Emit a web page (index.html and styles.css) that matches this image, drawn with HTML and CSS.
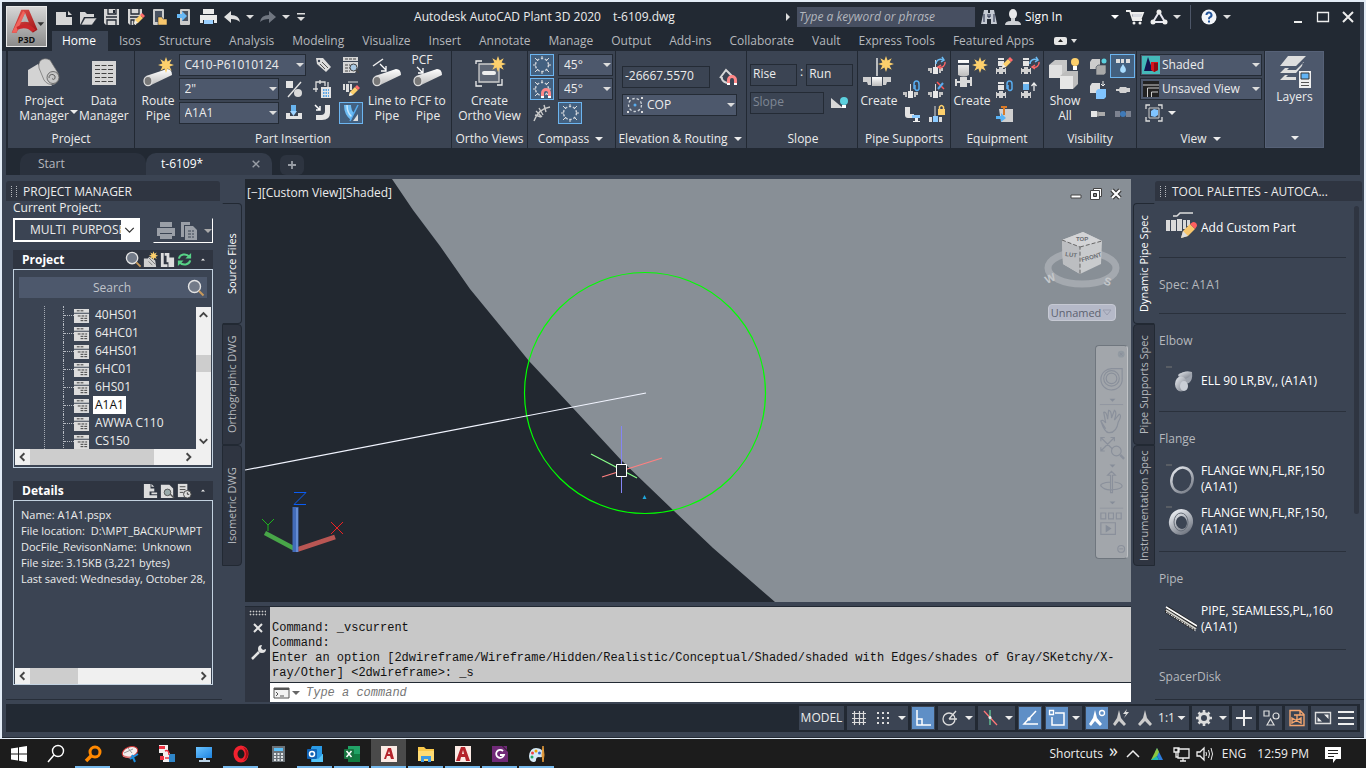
FILE: index.html
```html
<!DOCTYPE html>
<html lang="en">
<head>
<meta charset="utf-8">
<title>Autodesk AutoCAD Plant 3D 2020 - t-6109.dwg</title>
<link rel="stylesheet" href="styles.css">
</head>
<body>
<svg class="sprite" aria-hidden="true">
  <defs>
    <linearGradient id="gTube" x1="0" y1="0" x2="0" y2="1"><stop offset="0" stop-color="#fff"/><stop offset="1" stop-color="#bbb"/></linearGradient>
    <linearGradient id="gRed" x1="0" y1="0" x2="1" y2="1"><stop offset="0" stop-color="#e8564f"/><stop offset="1" stop-color="#9c1418"/></linearGradient>
    <linearGradient id="gSteel" x1="0" y1="0" x2="1" y2="1"><stop offset="0" stop-color="#e8ebf0"/><stop offset="1" stop-color="#717782"/></linearGradient>
    <linearGradient id="gBlue" x1="0" y1="0" x2="1" y2="1"><stop offset="0" stop-color="#6cc4ff"/><stop offset="1" stop-color="#1d83e0"/></linearGradient>
    <path id="spark" d="M0-8 1.600-3.600 5.700-5.700 3.600-1.600 8 0 3.600 1.600 5.700 5.700 1.600 3.600 0 8-1.600 3.600-5.700 5.700-3.600 1.600-8 0-3.600-1.600-5.700-5.700-1.600-3.600z" fill="#fdd06c"/>
    <g id="pencil"><path d="M-4 5-3 1 2-4 5-1 0 4z" fill="#fdd06c"/><path d="M2-4 4-6 7-3 5-1z" fill="#ff6b6b"/><path d="M-4 5-3 1 0 4z" fill="#eee"/></g>
    <g id="magnet"><path d="M0 9V5a5 5 0 0 1 10 0v4H7V5a2 2 0 0 0-4 0v4z" fill="#f88"/><path d="M0 8h3v2H0zM7 8h3v2H7z" fill="#fff"/></g>
    <g id="valve"><path d="M5.500 1v7" stroke="#ddd"/><path d="M3 8h5v7H3z" fill="#e8e8e8"/><path d="M-2 9h4v5H0v-2h-2zM9 9h4v3h-2v2H9z" fill="#c4c4c4"/></g>
    <g id="vessel"><path d="M2 0h6v2H2zM2 3h6v5H2z" fill="#e4e4e4"/><path d="M3 9h4v2h2v-1h1v6H9v-2H7v2H3v-2H1v2H0v-6h1v1h2z" fill="#d2d2d2"/></g>
    <g id="swirl" fill="none" stroke-width="1.500"><path d="M0 6A4.500 4.500 0 0 1 7 2" stroke="#6dbdf5"/><path d="M6-1 8 2 5 4" stroke="#6dbdf5"/><path d="M9 4A4.500 4.500 0 0 1 3 9" stroke="#f66"/><path d="M5 7 2 9l3 2" stroke="#f66"/></g>
  </defs>
  <symbol id="i-new" viewBox="0 0 24 24"><path d="M4 7h10v5h6v8H4z" fill="#d6d6d6"/><path d="M16 6v4h4z" fill="#d6d6d6"/></symbol>
  <symbol id="i-open" viewBox="0 0 24 24"><path d="M4 20V7h5l2 2h7v3H8z" fill="#d6d6d6"/><path d="M9 13h12l-5 7H5z" fill="#d6d6d6" stroke="#222933" stroke-width=".6"/></symbol>
  <symbol id="i-save" viewBox="0 0 24 24"><path d="M4 4h15v16H6l-2-2z" fill="#d6d6d6"/><path d="M8 4v5h8V4M6 12h11M7 20v-5h9v5" fill="none" stroke="#222933" stroke-width="1.300"/><path d="M13 5h2v3h-2z" fill="#222933"/></symbol>
  <symbol id="i-saveas" viewBox="0 0 24 24"><path d="M4 4h14v6l-5 6-1 4H6l-2-2z" fill="#d6d6d6"/><path d="M7 4v5h8V4M6 12h9M7 20v-5h3v5" fill="none" stroke="#222933" stroke-width="1.300"/><use href="#pencil" x="14" y="14"/></symbol>
  <symbol id="i-web" viewBox="0 0 24 24"><rect x="5" y="4" width="11" height="16" rx="1" fill="#ccc"/><path d="M7 6h7v11H7z" fill="#4a5362"/><path d="M10 20v-8h4l1 2h4v6z" fill="#f7c66c" stroke="#222933" stroke-width=".5"/></symbol>
  <symbol id="i-websave" viewBox="0 0 24 24"><rect x="8" y="4" width="10" height="16" rx="1" fill="#ccc"/><path d="M10 6h6v10h-6z" fill="#4a5362"/><path d="M5 9h5V6l5 5-5 5v-3H5z" fill="#67b8f6"/></symbol>
  <symbol id="i-print" viewBox="0 0 24 24"><path d="M7 4h11v5H7zM4 10h17v8h-3v-3H7v3H4z" fill="#e9e9e9"/><path d="M8 15h9v4H8z" fill="#9bd0ff"/></symbol>
  <symbol id="i-undo" viewBox="0 0 24 24"><path d="M4 12 11 6v4q8 0 9 7-3-3-9-3v4z" fill="#e0e0e0"/></symbol>
  <symbol id="i-redo" viewBox="0 0 24 24"><path d="M20 12 13 6v4q-8 0-9 7 3-3 9-3v4z" fill="#707680"/></symbol>
  <symbol id="i-down" viewBox="0 0 12 12"><path d="M2 4h8L6 8z" fill="currentColor"/></symbol>
  <symbol id="i-more" viewBox="0 0 12 12"><path d="M2 2h8v1.500H2zM2 6h8L6 10z" fill="currentColor"/></symbol>
  <symbol id="i-right" viewBox="0 0 12 12"><path d="M4 2v8l4-4z" fill="currentColor"/></symbol>
  <symbol id="i-binoc" viewBox="0 0 24 24"><path d="M7 5h4v3h2V5h4l3 14h-6v-5h-4v5H4z" fill="#c5cad3"/><path d="M7 9v8M17 9v8M11 9v3h2V9" stroke="#1d2440" fill="none"/></symbol>
  <symbol id="i-user" viewBox="0 0 24 24"><ellipse cx="12" cy="9" rx="4" ry="5" fill="#e8e8ea"/><path d="M10 13h4v3q6 0 6 4H4q0-4 6-4z" fill="#cfd1d5"/></symbol>
  <symbol id="i-cart" viewBox="0 0 24 24"><path d="M3 6h4l3 9h9M8 8h12l-2 5H9" fill="none" stroke="#eee" stroke-width="1.800"/><path d="M9 9h10l-1 3h-8z" fill="#d9dbe2"/><circle cx="11" cy="18" r="1.500" fill="#eee"/><circle cx="17" cy="18" r="1.500" fill="#eee"/></symbol>
  <symbol id="i-a360" viewBox="0 0 24 24"><path d="M12 7 6 17h12z" fill="none" stroke="#e6e6f0" stroke-width="2"/><circle cx="12" cy="7" r="2.500" fill="#eee"/><circle cx="6" cy="17" r="2.500" fill="#eee"/><circle cx="18" cy="17" r="2.500" fill="#eee"/></symbol>
  <symbol id="i-help" viewBox="0 0 24 24"><circle cx="12" cy="12" r="7.500" fill="#f4f6fa"/><path d="M9.500 10a2.500 2.500 0 1 1 3.500 2.200q-1 .5-1 2M12 15.500v2" fill="none" stroke="#23559b" stroke-width="2"/></symbol>
  <symbol id="i-min" viewBox="0 0 24 24"><path d="M8 17h8" stroke="#eee" stroke-width="2"/></symbol>
  <symbol id="i-max" viewBox="0 0 24 24"><path d="M6.500 7.500h11v9h-11z" fill="none" stroke="#eee" stroke-width="1.300"/></symbol>
  <symbol id="i-close" viewBox="0 0 24 24"><path d="m7 7 10 10M17 7 7 17" stroke="currentColor" stroke-width="2"/></symbol>

  <symbol id="i-projmgr" viewBox="0 0 34 34"><path d="M1 14 11 8 25 30H1z" fill="#d3d3d3"/><path d="M13 5q4-4 10-1l8 13q3 7-3 11-7 2-11-4l-5-12q-1-4 1-7z" fill="#cfcfcf" stroke="#6a6a6a" stroke-width=".7"/><circle cx="26" cy="21.500" r="6" fill="#c6c6c6" stroke="#555" stroke-width=".8"/><path d="M22 22q0-4 4-3.500 3 1 2 4-2 2-3 0" fill="none" stroke="#555" stroke-width=".9"/></symbol>
  <symbol id="i-datamgr" viewBox="0 0 34 34"><path d="M5 5h24v24H5z" fill="#d6d6d6"/><path d="M8 9.500h18M8 13.500h18M8 17.500h18M8 21.500h18M8 25.500h18" stroke="#444" stroke-dasharray="5 1.500"/></symbol>
  <symbol id="i-pipe" viewBox="0 0 34 34"><path d="M5 20 26 13q5 0 5 6L8 30q-6-2-3-10z" fill="url(#gTube)"/><ellipse cx="7" cy="25" rx="4" ry="4.700" fill="#777" stroke="#ddd" stroke-width="1.300"/></symbol>
  <symbol id="i-route" viewBox="0 0 34 34"><use href="#i-pipe" width="34" height="34"/><use href="#spark" x="25" y="9"/></symbol>
  <symbol id="i-linepipe" viewBox="0 0 34 34"><use href="#i-pipe" width="34" height="34"/><path d="m3 10 10-7" stroke="#eee" stroke-width="1.500"/><path d="m10 8 6 6M16 10v5h-5" fill="none" stroke="#fff" stroke-width="1.300"/></symbol>
  <symbol id="i-pcf" viewBox="0 0 34 34"><use href="#i-pipe" width="34" height="34"/><path d="m6 11 6 6M12 12v5H7" fill="none" stroke="#fff" stroke-width="1.300"/></symbol>
  <symbol id="i-tag" viewBox="0 0 24 24"><path d="M5 5h7l8 9-5 5-9-8z" fill="#dcdcdc"/><circle cx="8" cy="8" r="1.200" fill="#3b4453"/><path d="m9 11 5 5M11 9l6 6" stroke="#555"/></symbol>
  <symbol id="i-specview" viewBox="0 0 24 24"><path d="M4 4h15v4H4zM4 9h15v5l-3 6H4z" fill="#d6d6d6"/><path d="M6 6h11M6 12h5M6 15h5M6 18h5" stroke="#444" stroke-dasharray="3 1"/><circle cx="14.500" cy="14.500" r="3.500" fill="#a9c9e4" stroke="#444"/><path d="m17 17 3 3" stroke="#444" stroke-width="1.500"/></symbol>
  <symbol id="i-pct" viewBox="0 0 24 24"><path d="M4 4h7v7H4z" fill="#e3e3e3"/><path d="M19 5 6 20" stroke="#e3e3e3" stroke-width="1.400"/><circle cx="16" cy="16" r="4" fill="#d9d9d9"/></symbol>
  <symbol id="i-assign" viewBox="0 0 24 24"><path d="M5 10V5h9v4M9 3v4M17 5v5M2 12h5M5 9v6" fill="none" stroke="#ddd" stroke-width="1.300"/><path d="M10 10h10v11H10z" fill="#e3e3e3"/><path d="M12 13h6M12 16h6M12 19h6" stroke="#2990e8" stroke-width="1.500" stroke-dasharray="1.500 1"/></symbol>
  <symbol id="i-pipeedit" viewBox="0 0 24 24"><path d="M4 7h2v6H4zM7 7h3v8H7zM11 7h2v6h-2z" fill="#ddd"/><path d="M9 5h10" stroke="#ddd"/><use href="#pencil" x="14" y="14"/></symbol>
  <symbol id="i-tap" viewBox="0 0 24 24"><path d="M4 12h4v3h8v-3h4v6H4z" fill="#e3e3e3"/><path d="M9 4h5v7h-5z" fill="#68b4ef"/><path d="M8 10h7l-3.500 5z" fill="#9ed3ff"/></symbol>
  <symbol id="i-bend" viewBox="0 0 24 24"><path d="M14 4h5v8q0 7-8 7H5v-5h5q4 0 4-4z" fill="#e6e6e6"/><path d="m4 4 5 5M9 5v4H5" fill="none" stroke="#fff" stroke-width="1.500"/></symbol>
  <symbol id="i-cutback" viewBox="0 0 24 24"><path d="M5 4h7q0 5 3 8l-3 7Q5 14 5 4z" fill="#6dbdf5"/><path d="M8 4q0 8 5 12" stroke="#c6e8ff" stroke-width="1.500" fill="none"/><path d="M19 4 11 20" stroke="#58acef" stroke-width="1.500"/><path d="M19 13v7h-5z" fill="#ddd"/></symbol>
  <symbol id="i-ortho" viewBox="0 0 34 34"><path d="M3 8V5h6M24 29h5v-6M3 25v5h6" fill="none" stroke="#eee" stroke-width="1.300"/><path d="M6 8h20v18H6z" fill="#5f6775" stroke="#ccc" stroke-width="1.300"/><rect x="9" y="15" width="14" height="4" rx="2" fill="#eee"/><use href="#spark" x="25" y="8"/></symbol>
  <symbol id="i-compass" viewBox="0 0 24 24"><circle cx="12" cy="12" r="6.500" fill="none" stroke="#c9ced6" stroke-width="1.500" stroke-dasharray="2.400 1.700"/><path d="m5 5 3 3M19 5l-3 3M5 19l3-3M19 19l-3-3M12 3v3M12 21v-3M3 12h3M21 12h-3" stroke="#ddd"/></symbol>
  <symbol id="i-compassm" viewBox="0 0 24 24"><use href="#i-compass" width="24" height="24"/><use href="#magnet" x="11" y="11"/></symbol>
  <symbol id="i-ticks" viewBox="0 0 24 24"><path d="M4 20Q8 8 20 6M6 10l6 6M9 7l4 7M5 14l6 2M14 4l2 7" fill="none" stroke="#c9c9c9" stroke-width="1.400"/></symbol>
  <symbol id="i-elev" viewBox="0 0 24 24"><path d="m4 13 6-8 7 7M6 12q-1 4 5 6" fill="none" stroke="#d6d6d6" stroke-width="2"/><use href="#magnet" x="11" y="10"/></symbol>
  <symbol id="i-slope" viewBox="0 0 24 24"><path d="M4 7 16 17H4z" fill="#d8d8d8"/><circle cx="17" cy="10" r="4" fill="#5cd0de"/><path d="M15 14h4v3h-4z" fill="#fff"/></symbol>
  <symbol id="i-support" viewBox="0 0 34 34"><path d="M15 2v18" stroke="#e4e4e4" stroke-width="1.500"/><path d="M10 21h10v9H10z" fill="url(#gTube)"/><path d="M1 21h8v8H6l-1-3H1zM21 21h8v5h-4l-1 3h-3z" fill="#cfcfcf"/><use href="#spark" x="24" y="8"/></symbol>
  <symbol id="i-supr" viewBox="0 0 24 24"><use href="#valve" x="5" y="5"/><use href="#swirl" x="11" y="4"/></symbol>
  <symbol id="i-supa" viewBox="0 0 24 24"><use href="#valve" x="5" y="5"/><path d="M14 11V6a2.500 3 0 0 1 5 0v5q-2 3-4 0V7" fill="none" stroke="#58acef" stroke-width="1.500"/></symbol>
  <symbol id="i-supd" viewBox="0 0 24 24"><use href="#valve" x="5" y="5"/><path d="m12 4 7 7" stroke="#f55" stroke-width="1.500"/><path d="m13 11 5-6" stroke="#58acef" stroke-width="2"/></symbol>
  <symbol id="i-supb" viewBox="0 0 24 24"><path d="M5 5h5v7h4v4H8q-3 0-3-3z" fill="#e3e3e3"/><path d="M12 13h8v3h-8z" fill="#8ccbff"/><path d="M15 16h3v3h2v1h-7v-1h2z" fill="#eee"/></symbol>
  <symbol id="i-supl" viewBox="0 0 24 24"><path d="M10 4v10" stroke="#ddd"/><path d="M4 15h3v5H4zM14 15h3v5h-3z" fill="#ddd"/><path d="M8 14h5v6H8z" fill="#8ccbff"/><path d="M13 7h7v6h-7z" fill="#fdd06c"/><path d="M14.500 8V5q2-3 4 0v3" fill="none" stroke="#fdd06c" stroke-width="1.500"/></symbol>
  <symbol id="i-equip" viewBox="0 0 34 34"><path d="M3 4h11v3H3zM3 9h11v10q-5 3-11 0z" fill="url(#gTube)"/><path d="M5 21h7v3h3v-3h2v9h-2v-3h-3v4H5v-4H2v3H0v-7h2v2h3z" fill="#dadada"/><use href="#spark" x="25" y="9"/></symbol>
  <symbol id="i-eqedit" viewBox="0 0 24 24"><use href="#vessel" x="3" y="4"/><use href="#pencil" x="13" y="9"/></symbol>
  <symbol id="i-eqr" viewBox="0 0 24 24"><use href="#vessel" x="3" y="4"/><use href="#swirl" x="12" y="4"/></symbol>
  <symbol id="i-eqa" viewBox="0 0 24 24"><use href="#vessel" x="3" y="4"/><path d="M14 11V6a2.500 3 0 0 1 5 0v5q-2 3-4 0V7" fill="none" stroke="#58acef" stroke-width="1.500"/></symbol>
  <symbol id="i-equp" viewBox="0 0 24 24"><use href="#vessel" x="3" y="4"/><path d="M5 6h6v6H5z" fill="#68b4ef"/><path d="M16 13V5M13.500 8 16 5l2.500 3" fill="none" stroke="#eee" stroke-width="1.300"/></symbol>
  <symbol id="i-eqimp" viewBox="0 0 24 24"><path d="M6 7h14v13H8z" fill="#d0d0d0"/><path d="M8 4h6v2h-2v7h-2V6H8z" fill="#d97b29"/><path d="M3 14h5v-3l5 5-5 4v-3H3z" fill="#58b3f5"/></symbol>
  <symbol id="i-showall" viewBox="0 0 34 34"><path d="M1 9 7 4h12v12l-5 6H1z" fill="#c6c6c6"/><path d="M1 9h13v13H1z" fill="#e0e0e0"/><path d="M12 20l6-5h12v13l-5 5H12z" fill="#bdbdbd"/><path d="M12 20h13v13H12z" fill="#e6e6e6"/><circle cx="27" cy="6" r="4" fill="#fdd06c"/><path d="M25 10h4v4h-4z" fill="#fff"/></symbol>
  <symbol id="i-hide" viewBox="0 0 24 24"><path d="m4 8 2-3h8v8l-2 2H4z" fill="#ccc"/><path d="m10 13 2-2h8v8l-2 2h-8z" fill="#a9a9a9" stroke="#3b4453" stroke-width=".6"/><circle cx="18" cy="7" r="2.500" fill="#5cd0de"/></symbol>
  <symbol id="i-iso" viewBox="0 0 24 24"><path d="m4 8 2-3h8v8l-2 2H4z" fill="#ddd"/><path d="m10 13 2-2h8v8l-2 2h-8z" fill="#80c4ff"/><path d="M17 3v5M15 6l2 2 2-2" fill="none" stroke="#eee"/></symbol>
  <symbol id="i-join" viewBox="0 0 24 24"><path d="M5 9h6v6H5z" fill="#e4e4e4"/><path d="M11 10h8v4h-8z" fill="#aaa"/><path d="M12 9v6" stroke="#888"/></symbol>
  <symbol id="i-drop" viewBox="0 0 24 24"><path d="M5 5h4v4H5zM10 5h3v4h-3zM15 5h4v4h-4z" fill="#ddd"/><path d="M12 10q6 8 0 9-6-1 0-9z" fill="#a8dcff"/></symbol>
  <symbol id="i-link" viewBox="0 0 24 24"><path d="M5 11h3l1-2h6l1 1h3v4h-3l-1 1H9l-1-2H5z" fill="#d2d2d2"/></symbol>
  <symbol id="i-link2" viewBox="0 0 24 24"><path d="M4 9h5v6H4zM15 9h5v6h-5z" fill="#7c8290"/><circle cx="12" cy="12" r="3" fill="#3f7ab8"/></symbol>
  <symbol id="i-shaded" viewBox="0 0 18 18"><path d="M0 0h18v18H0z" fill="#45b9b9"/><path d="m6 1 5 14H2z" fill="#13164f"/><path d="M9 6h7v8l-4 2-3-2z" fill="#d5131d"/><path d="M12 7h4v7l-4 2z" fill="#8b0b13"/></symbol>
  <symbol id="i-view" viewBox="0 0 18 18"><path d="M1 1h16v16H1z" fill="#222"/><path d="M1 5h16M5.500 17V8H17M9.500 17v-5H16" stroke="#ccc" fill="none"/></symbol>
  <symbol id="i-viewcap" viewBox="0 0 24 24"><path d="M4 8V4h4M16 4h4v4M20 16v4h-4M8 20H4v-4" fill="none" stroke="#ddd" stroke-width="1.300"/><path d="M7 7h10v10H7z" fill="none" stroke="#ccc"/><path d="m9 10 3-2 4 1v5l-3 2-4-1z" fill="#80c4ff"/></symbol>
  <symbol id="i-layers" viewBox="0 0 34 34"><path d="M10 1h18L18 11H2zM2 18l5-5h4L9 15h9l8-8h-1l-1 4-6 7zM2 25l5-5h3l-2 2h10v3z" fill="#dedede"/><path d="M21 16h12v17H21z" fill="#eee"/><path d="M23 18h8v6h-8z" fill="#63b4f4" stroke="#333"/><path d="M23 27.500h8M23 30.500h8" stroke="#555" fill="none"/></symbol>
  <symbol id="i-copclass" viewBox="0 0 24 24"><circle cx="12" cy="12" r="6.500" fill="none" stroke="#cfd4da" stroke-width="1.300" stroke-dasharray="2.500 2"/><path d="M4 4h2v2H4zM18 4h2v2h-2zM4 18h2v2H4zM18 18h2v2h-2z" fill="#ddd"/><circle cx="12" cy="12" r="1.500" fill="#58acef"/></symbol>

  <symbol id="i-find" viewBox="0 0 18 18"><circle cx="7.500" cy="7.500" r="6" fill="#737b89" stroke="#e4e4e4" stroke-width="1.400"/><path d="m12 12 4.500 4.500" stroke="#c99a5b" stroke-width="2"/></symbol>
  <symbol id="i-pmnew" viewBox="0 0 18 18"><path d="M2 8h4l2-2 6 4 1 7H2z" fill="#d0d0d0"/><path d="m7 7 7 7M7 11l4 4" stroke="#777"/><use href="#spark" x="12" y="5" transform="translate(5 2) scale(.6)"/></symbol>
  <symbol id="i-pmcopy" viewBox="0 0 18 18"><path d="M2 2h3v12h4v3H2zM6 2h5v10H8V5H6zM10 7h6v10h-6z" fill="#ddd"/></symbol>
  <symbol id="i-refresh" viewBox="0 0 18 18"><path d="M3 8a6 5 0 0 1 11-2M15 10a6 5 0 0 1-11 2" fill="none" stroke="#57d287" stroke-width="2.200"/><path d="M16 2v6h-6zM2 16v-6h6z" fill="#57d287"/></symbol>
  <symbol id="i-up" viewBox="0 0 12 12"><path d="M4 7h4L6 5z" fill="#eee"/></symbol>
  <symbol id="i-printg" viewBox="0 0 24 24"><path d="M6 3h12v5H6zM3 9h18v8h-3v-3H6v3H3zM6 15h12v5H6z" fill="#9a9fa7"/></symbol>
  <symbol id="i-pubg" viewBox="0 0 24 24"><path d="M3 3h9v3H6v12H3zM7 7h8l4 4v10H7z" fill="#9a9fa7"/><path d="M10 12h6M10 15h6M10 18h6" stroke="#3b4453" stroke-dasharray="3 1"/></symbol>
  <symbol id="i-spec" viewBox="0 0 16 16"><path d="M0 1h16v4H0zM0 6h16v10H0z" fill="#dcdcdc"/><path d="M3 3h7M4 8.500h10M7 11h7M7 13.500h7" stroke="#333" stroke-dasharray="3 1"/></symbol>
  <symbol id="i-chev-l" viewBox="0 0 16 16"><path d="m10 4-4 4 4 4" fill="none" stroke="#444" stroke-width="2"/></symbol>
  <symbol id="i-chev-r" viewBox="0 0 16 16"><path d="m6 4 4 4-4 4" fill="none" stroke="#444" stroke-width="2"/></symbol>
  <symbol id="i-chev-u" viewBox="0 0 16 16"><path d="m4 10 4-4 4 4" fill="none" stroke="#444" stroke-width="2"/></symbol>
  <symbol id="i-chev-d" viewBox="0 0 16 16"><path d="m4 6 4 4 4-4" fill="none" stroke="#444" stroke-width="2"/></symbol>
  <symbol id="i-chev-thin" viewBox="0 0 16 16"><path d="m4 6 4 4 4-4" fill="none" stroke="#333" stroke-width="1.200"/></symbol>
  <symbol id="i-doc1" viewBox="0 0 18 18"><path d="M2 2h7v5h4v3H8v4h8v3H2zM10 2l3 3h-3zM10 11h6v2h-6z" fill="#ddd"/></symbol>
  <symbol id="i-doc2" viewBox="0 0 18 18"><path d="M2 3h9l4 4v10H2z" fill="#ddd"/><circle cx="9" cy="11" r="3.500" fill="#9aa" stroke="#555"/><path d="m12 13 4 4" stroke="#555" stroke-width="1.500"/></symbol>
  <symbol id="i-doc3" viewBox="0 0 18 18"><path d="M2 2h10v14H2z" fill="#ddd"/><path d="M4 5h6M4 8h6M4 11h4" stroke="#444"/><circle cx="12" cy="13" r="4" fill="#ddd" stroke="#444"/><path d="M12 11v2h2" stroke="#333" fill="none"/></symbol>

  <symbol id="s-grid" viewBox="0 0 24 24"><path d="M7.500 5v14M12.500 5v14M16.500 5v14M5 7.500h14M5 12.500h14M5 16.500h14" stroke="#ddd" stroke-width="1.200"/></symbol>
  <symbol id="s-snap" viewBox="0 0 24 24"><path d="M6 7h13M6 12h13M6 17h13" stroke="#ddd" stroke-width="2" stroke-dasharray="2 3"/></symbol>
  <symbol id="s-ortho" viewBox="0 0 24 24"><path d="M6 4v15h14M6 13h5v6" fill="none" stroke="#fff" stroke-width="1.500"/></symbol>
  <symbol id="s-polar" viewBox="0 0 24 24"><circle cx="11" cy="13" r="6" fill="none" stroke="#ddd" stroke-width="1.300"/><path d="m11 13 7-8M11 13h8" stroke="#ddd" stroke-width="1.300"/></symbol>
  <symbol id="s-isod" viewBox="0 0 24 24"><path d="m6 5 13 14" stroke="#f77" stroke-width="1.300"/><path d="M12 4v15" stroke="#6c9" stroke-width="1.300"/><circle cx="12" cy="11.500" r="1.500" fill="#eee"/></symbol>
  <symbol id="s-track" viewBox="0 0 24 24"><path d="M18 5 6 18h14" fill="none" stroke="#fff" stroke-width="1.500"/><circle cx="11" cy="13" r="1.800" fill="#fff"/></symbol>
  <symbol id="s-osnap" viewBox="0 0 24 24"><path d="M10 7h9v12H7v-8" fill="none" stroke="#fff" stroke-width="1.500"/><path d="M4.500 4.500h4v4h-4z" fill="none" stroke="#fff" stroke-width="1.300"/></symbol>
  <symbol id="s-ann" viewBox="0 0 24 24"><path d="m12 4 2 8 5 6-2 2-5-5-5 5-2-2 5-6z" fill="#ccc"/></symbol>
  <symbol id="s-annv" viewBox="0 0 24 24"><path d="m10 4 2 8 5 6-2 2-5-5-4 5-2-2 4-6z" fill="#fff"/><circle cx="17" cy="7" r="2.500" fill="none" stroke="#fff" stroke-width="1.300"/></symbol>
  <symbol id="s-anna" viewBox="0 0 24 24"><path d="m10 4 2 8 5 6-2 2-5-5-4 5-2-2 4-6z" fill="#ccc"/><path d="m18 3-4 5h3l-2 4 5-6h-3z" fill="#ddd"/></symbol>
  <symbol id="s-gear" viewBox="0 0 24 24"><circle cx="12" cy="12" r="4.500" fill="none" stroke="#ddd" stroke-width="3"/><path d="M12 4v3M12 17v3M4 12h3M17 12h3M6.500 6.500l2 2M15.500 15.500l2 2M6.500 17.500l2-2M15.500 8.500l2-2" stroke="#ddd" stroke-width="2.600"/></symbol>
  <symbol id="s-plus" viewBox="0 0 24 24"><path d="M12 4v16M4 12h16" stroke="#eee" stroke-width="2"/></symbol>
  <symbol id="s-isolate" viewBox="0 0 24 24"><path d="M5 5h5v5H5zM8 19l3.500-6 3.500 6z" fill="none" stroke="#ddd" stroke-width="1.200"/><circle cx="17" cy="10" r="3" fill="none" stroke="#ddd" stroke-width="1.200"/></symbol>
  <symbol id="s-hw" viewBox="0 0 24 24"><path d="M5 4.500h10l4 4v11H5zM15 4v5h4" fill="none" stroke="#f3a56f" stroke-width="1.400"/><path d="m7 12 9 5v-5l-9 5zM9 9h6M12 9v5" stroke="#f3a56f" stroke-width="1.400" fill="none"/></symbol>
  <symbol id="s-clean" viewBox="0 0 24 24"><path d="M4.500 6.500h15v11h-15z" fill="none" stroke="#ddd" stroke-width="1.400"/><path d="M13 8.500h4.500V13zM6.500 11v4.500H11z" fill="#eee"/></symbol>
  <symbol id="s-menu" viewBox="0 0 24 24"><path d="M4 6h16M4 12h16M4 18h16" stroke="#eee" stroke-width="2"/></symbol>
</svg>

<div class="window">
  <header class="header">
    <button class="appbtn" aria-label="Plant 3D menu">
      <svg viewBox="0 0 41 41"><path d="M5 27 15 3h8l9 21-5 3-3-7q-6-2-11 1l-3 6z" fill="url(#gRed)"/><path d="M14 16 19 6l4 10q-4-1-9 0z" fill="#b6b6b6"/><path d="M5 27 17 4l2 2-9 21z" fill="#f0635c"/><path d="M10 21q12-7 20 3l-4 2q-6-6-15-2z" fill="#c9272b"/><path d="M32 16h7l-3.500 4z" fill="#333"/></svg>
      <span>P3D</span>
    </button>
    <div class="titlebar">
      <div class="quick">
        <button aria-label="New"><svg><use href="#i-new"/></svg></button>
        <button aria-label="Open"><svg><use href="#i-open"/></svg></button>
        <button aria-label="Save"><svg><use href="#i-save"/></svg></button>
        <button aria-label="Save as"><svg><use href="#i-saveas"/></svg></button>
        <button aria-label="Open from web"><svg><use href="#i-web"/></svg></button>
        <button aria-label="Save to web"><svg><use href="#i-websave"/></svg></button>
        <button aria-label="Plot"><svg><use href="#i-print"/></svg></button>
        <button aria-label="Undo"><svg><use href="#i-undo"/></svg></button>
        <button class="sm" aria-label="Undo list"><svg><use href="#i-down"/></svg></button>
        <button aria-label="Redo"><svg><use href="#i-redo"/></svg></button>
        <button class="sm" aria-label="Redo list"><svg><use href="#i-down"/></svg></button>
        <button class="sm more" aria-label="Customize"><svg><use href="#i-more"/></svg></button>
      </div>
      <h1 class="title"><span>Autodesk AutoCAD Plant 3D 2020</span><span>t-6109.dwg</span></h1>
      <div class="infocenter">
        <svg class="sm"><use href="#i-right"/></svg>
        <input class="infosearch" aria-label="Search help" placeholder="Type a keyword or phrase">
        <button aria-label="Search"><svg><use href="#i-binoc"/></svg></button>
        <button class="signin"><svg><use href="#i-user"/></svg>Sign In <svg class="sm end"><use href="#i-down"/></svg></button>
        <button class="cart" aria-label="App store"><svg><use href="#i-cart"/></svg></button>
        <button aria-label="Autodesk 360"><svg><use href="#i-a360"/></svg></button>
        <button class="sm" aria-label="More"><svg><use href="#i-down"/></svg></button>
        <button class="help" aria-label="Help"><svg><use href="#i-help"/></svg></button>
        <button class="sm" aria-label="Help list"><svg><use href="#i-down"/></svg></button>
      </div>
      <div class="winctl">
        <button aria-label="Minimize"><svg><use href="#i-min"/></svg></button>
        <button aria-label="Maximize"><svg><use href="#i-max"/></svg></button>
        <button aria-label="Close"><svg><use href="#i-close"/></svg></button>
      </div>
    </div>
    <nav class="tabs">
      <a href="#" class="on">Home</a><a href="#">Isos</a><a href="#">Structure</a><a href="#">Analysis</a><a href="#">Modeling</a><a href="#">Visualize</a><a href="#">Insert</a><a href="#">Annotate</a><a href="#">Manage</a><a href="#">Output</a><a href="#">Add-ins</a><a href="#">Collaborate</a><a href="#">Vault</a><a href="#">Express Tools</a><a href="#">Featured Apps</a>
      <button class="ribmin" aria-label="Minimize ribbon"><svg viewBox="0 0 26 12"><rect x="1" y="2" width="13" height="8" rx="2" fill="#e6e6e6"/><path d="m5 7 2.500-3L10 7z" fill="#222"/><path d="M18 4h6l-3 4z" fill="#ddd"/></svg></button>
    </nav>
  </header>

  <section class="ribbon">
    <div class="panel p-project">
      <div class="tools">
        <button class="big"><svg><use href="#i-projmgr"/></svg><span>Project<br>Manager</span></button>
        <button class="drop" aria-label="Project Manager list"><svg class="sm"><use href="#i-down"/></svg></button>
        <button class="big"><svg><use href="#i-datamgr"/></svg><span>Data<br>Manager</span></button>
      </div>
      <h2>Project</h2>
    </div>
    <div class="panel p-part">
      <div class="tools">
        <button class="big"><svg><use href="#i-route"/></svg><span>Route<br>Pipe</span></button>
        <div class="partgrid">
          <label class="combo wide"><select aria-label="Line number"><option>C410-P61010124</option></select></label>
          <button class="ic" aria-label="Tag"><svg><use href="#i-tag"/></svg></button>
          <button class="ic" aria-label="Spec viewer"><svg><use href="#i-specview"/></svg></button>
          <label class="combo"><select aria-label="Size"><option>2"</option></select></label>
          <button class="ic" aria-label="Toggle"><svg><use href="#i-pct"/></svg></button>
          <button class="ic" aria-label="Assign tag"><svg><use href="#i-assign"/></svg></button>
          <button class="ic" aria-label="Edit pipe"><svg><use href="#i-pipeedit"/></svg></button>
          <label class="combo"><select aria-label="Spec"><option>A1A1</option></select></label>
          <button class="ic" aria-label="Stub-in"><svg><use href="#i-tap"/></svg></button>
          <button class="ic" aria-label="Pipe bend"><svg><use href="#i-bend"/></svg></button>
          <button class="ic on" aria-label="Cutback elbow"><svg><use href="#i-cutback"/></svg></button>
        </div>
        <button class="big"><svg><use href="#i-linepipe"/></svg><span>Line to<br>Pipe</span></button>
        <button class="big pcf"><em>PCF</em><svg><use href="#i-pcf"/></svg><span>PCF to<br>Pipe</span></button>
      </div>
      <h2>Part Insertion</h2>
    </div>
    <div class="panel p-ortho">
      <div class="tools"><button class="big"><svg><use href="#i-ortho"/></svg><span>Create<br>Ortho View</span></button></div>
      <h2>Ortho Views</h2>
    </div>
    <div class="panel p-compass">
      <div class="tools compassgrid">
        <button class="ic on" aria-label="Snap"><svg><use href="#i-compass"/></svg></button>
        <label class="combo"><select aria-label="Snap angle"><option>45°</option></select></label>
        <button class="ic on" aria-label="Tolerance"><svg><use href="#i-compassm"/></svg></button>
        <label class="combo"><select aria-label="Tolerance angle"><option>45°</option></select></label>
        <button class="ic" aria-label="Ticks"><svg><use href="#i-ticks"/></svg></button>
        <button class="ic on" aria-label="Compass"><svg><use href="#i-compass"/></svg></button>
      </div>
      <h2>Compass <svg class="sm"><use href="#i-down"/></svg></h2>
    </div>
    <div class="panel p-elev">
      <div class="tools elevgrid">
        <input class="field" aria-label="Elevation" value="-26667.5570">
        <button class="ic" aria-label="Elevation snap"><svg><use href="#i-elev"/></svg></button>
        <label class="combo iconed"><svg><use href="#i-copclass"/></svg><select aria-label="Routing"><option>COP</option></select></label>
      </div>
      <h2>Elevation &amp; Routing <svg class="sm"><use href="#i-down"/></svg></h2>
    </div>
    <div class="panel p-slope">
      <div class="tools slopegrid">
        <div class="pair"><input class="field" aria-label="Rise" value="Rise"><span>:</span><input class="field" aria-label="Run" value="Run"></div>
        <div class="pair"><input class="field dim" aria-label="Slope" value="Slope"><button class="ic" aria-label="Show slope"><svg><use href="#i-slope"/></svg></button></div>
      </div>
      <h2>Slope</h2>
    </div>
    <div class="panel p-supp">
      <div class="tools">
        <button class="big"><svg><use href="#i-support"/></svg><span>Create</span></button>
        <div class="mini">
          <i></i><button aria-label="Convert"><svg><use href="#i-supr"/></svg></button>
          <button aria-label="Attach"><svg><use href="#i-supa"/></svg></button><button aria-label="Detach"><svg><use href="#i-supd"/></svg></button>
          <button aria-label="Support pipe"><svg><use href="#i-supb"/></svg></button><button aria-label="Lock"><svg><use href="#i-supl"/></svg></button>
        </div>
      </div>
      <h2>Pipe Supports</h2>
    </div>
    <div class="panel p-equip">
      <div class="tools">
        <button class="big"><svg><use href="#i-equip"/></svg><span>Create</span></button>
        <div class="mini">
          <button aria-label="Modify"><svg><use href="#i-eqedit"/></svg></button><button aria-label="Convert"><svg><use href="#i-eqr"/></svg></button>
          <button aria-label="Attach"><svg><use href="#i-eqa"/></svg></button><button aria-label="Update"><svg><use href="#i-equp"/></svg></button>
          <button aria-label="Import"><svg><use href="#i-eqimp"/></svg></button>
        </div>
      </div>
      <h2>Equipment</h2>
    </div>
    <div class="panel p-vis">
      <div class="tools">
        <button class="big"><svg><use href="#i-showall"/></svg><span>Show<br>All</span></button>
        <div class="mini">
          <button aria-label="Hide"><svg><use href="#i-hide"/></svg></button><button class="on" aria-label="Welds"><svg><use href="#i-drop"/></svg></button>
          <button aria-label="Isolate"><svg><use href="#i-iso"/></svg></button><button aria-label="Fittings"><svg><use href="#i-link"/></svg></button>
          <button aria-label="Insulation"><svg><use href="#i-join"/></svg></button><button aria-label="Connectors"><svg><use href="#i-link2"/></svg></button>
        </div>
      </div>
      <h2>Visibility</h2>
    </div>
    <div class="panel p-view">
      <div class="tools viewgrid">
        <label class="combo iconed small"><svg><use href="#i-shaded"/></svg><select aria-label="Visual style"><option>Shaded</option></select></label>
        <label class="combo iconed small"><svg><use href="#i-view"/></svg><select aria-label="Named view"><option>Unsaved View</option></select></label>
        <button class="ic split" aria-label="Isolate objects"><svg><use href="#i-viewcap"/></svg><svg class="sm"><use href="#i-down"/></svg></button>
      </div>
      <h2>View <svg class="sm"><use href="#i-down"/></svg></h2>
    </div>
    <button class="layers"><svg><use href="#i-layers"/></svg><span>Layers</span><svg class="sm"><use href="#i-down"/></svg></button>
  </section>

  <nav class="doctabs">
    <a href="#" class="doctab start">Start</a>
    <a href="#" class="doctab on">t-6109*<svg><use href="#i-close"/></svg></a>
    <button class="plus" aria-label="New drawing"><svg viewBox="0 0 24 24"><path d="M12 8v8M8 12h8" stroke="#999ea6" stroke-width="1.800"/></svg></button>
  </nav>

  <main class="work">
    <aside class="left">
      <div class="palette">
        <h2 class="palhead">PROJECT MANAGER</h2>
        <div class="curr">
          <label for="proj">Current Project:</label>
          <div class="currrow">
            <div class="projsel"><select id="proj"><option>MULTI &nbsp;PURPOSE</option></select><svg><use href="#i-chev-thin"/></svg></div>
            <div class="pubbox"><svg><use href="#i-printg"/></svg><svg><use href="#i-pubg"/></svg><svg class="sm"><use href="#i-down"/></svg></div>
          </div>
        </div>
        <section class="box project">
          <h3>Project <span><svg><use href="#i-find"/></svg><svg><use href="#i-pmnew"/></svg><svg><use href="#i-pmcopy"/></svg><svg><use href="#i-refresh"/></svg><svg class="sm"><use href="#i-up"/></svg></span></h3>
          <div class="boxbody">
            <div class="search"><input aria-label="Search project" placeholder="Search"><svg><use href="#i-find"/></svg></div>
            <div class="treewrap">
              <ul class="tree">
                <li><svg><use href="#i-spec"/></svg><a href="#">40HS01</a></li>
                <li><svg><use href="#i-spec"/></svg><a href="#">64HC01</a></li>
                <li><svg><use href="#i-spec"/></svg><a href="#">64HS01</a></li>
                <li><svg><use href="#i-spec"/></svg><a href="#">6HC01</a></li>
                <li><svg><use href="#i-spec"/></svg><a href="#">6HS01</a></li>
                <li><svg><use href="#i-spec"/></svg><a href="#" class="sel">A1A1</a></li>
                <li><svg><use href="#i-spec"/></svg><a href="#">AWWA C110</a></li>
                <li><svg><use href="#i-spec"/></svg><a href="#">CS150</a></li>
              </ul>
              <div class="vscroll"><svg><use href="#i-chev-u"/></svg><i></i><svg><use href="#i-chev-d"/></svg></div>
            </div>
            <div class="hscroll tree-h"><svg><use href="#i-chev-l"/></svg><i></i><svg><use href="#i-chev-r"/></svg></div>
          </div>
        </section>
        <section class="box details">
          <h3>Details <span><svg><use href="#i-doc1"/></svg><svg><use href="#i-doc2"/></svg><svg><use href="#i-doc3"/></svg><svg class="sm"><use href="#i-up"/></svg></span></h3>
          <div class="boxbody">
            <p>Name: A1A1.pspx<br>File location: &nbsp;D:\MPT_BACKUP\MPT<br>DocFile_RevisonName: &nbsp;Unknown<br>File size: 3.15KB (3,221 bytes)<br>Last saved: Wednesday, October 28,</p>
            <div class="hscroll"><svg><use href="#i-chev-l"/></svg><i></i><svg><use href="#i-chev-r"/></svg></div>
          </div>
        </section>
      </div>
      <div class="vtabs"><button class="on">Source Files</button><button>Orthographic DWG</button><button>Isometric DWG</button></div>
    </aside>

    <div class="center">
      <div class="viewport">
        <svg class="scene" viewBox="-1 0 886 423" preserveAspectRatio="xMinYMin slice">
          <path d="M146 0 167 31 194 67 224 110 283 182 326 228 376 282 427 331 467 369 529 423H2000V0z" fill="#888f96"/>
          <circle cx="399" cy="214" r="120.500" fill="none" stroke="#0f0" stroke-width="1.200"/>
          <path d="M-1 291 400 214" stroke="#f2f5ff" stroke-width="1.200"/>
          <path d="M375.500 247v67" stroke="#8585f5"/>
          <path d="m345 275 46 24" stroke="#8f8" stroke-width="1.200"/>
          <path d="m356 298 60-19" stroke="#ff8080" stroke-width="1.200"/>
          <path d="M370.500 285.500h10v12h-10z" fill="#222830" stroke="#fff"/>
          <path d="m398.500 316 2 4h-4z" fill="#1fa6dc"/>
          <path d="M49 370 19 354" stroke="#48a648" stroke-width="4.500"/>
          <path d="M50 371 89 358" stroke="#b95653" stroke-width="5"/>
          <path d="M49.500 328v45" stroke="#426bb8" stroke-width="6"/><path d="M51 329v44" stroke="#7299dd" stroke-width="1.500"/>
          <path d="M48 313.500h12L48 325.500h12" fill="none" stroke="#0a5cf5"/>
          <path d="m16 340 6 6 6-6M22 346v6" fill="none" stroke="#1db41d"/>
          <path d="m85 343 12 12M97 343 85 355" stroke="#e22"/>
        </svg>
        <div class="vplabel">[−][Custom View][Shaded]</div>
        <div class="vpctl">
          <svg viewBox="0 0 16 16"><path d="M3 9h10v3H3z" fill="#fff" stroke="#444"/></svg>
          <svg viewBox="0 0 16 16"><path d="M5.500 2.500h8v8h-8z" fill="#fff" stroke="#444"/><path d="M2.500 4.500h9v9h-9z" fill="#fff" stroke="#444"/><path d="M5.500 7.500h3v3h-3z" fill="#888" stroke="#333"/></svg>
          <svg viewBox="0 0 16 16"><path d="m4 4 8 8M12 4l-8 8" stroke="#333" stroke-width="4.500"/><path d="m4 4 8 8M12 4l-8 8" stroke="#fff" stroke-width="2.200"/></svg>
        </div>
        <div class="cube">
          <svg viewBox="0 0 80 62">
            <ellipse cx="39" cy="38" rx="34" ry="16" fill="none" stroke="#a4a9af" stroke-width="7"/>
            <path d="M19 10 40 2 59 11 58 34 37 44 20 34z" fill="#c9cbcd"/>
            <path d="M19 10 40 2 59 11 37 17z" fill="#d3d4d6"/><path d="M19 10 37 17v27L20 34z" fill="#bcbec1"/>
            <path d="M19 10 37 17v27M37 17 59 11" stroke="#666" fill="none" stroke-dasharray="4 2"/>
            <g class="cubetext"><text x="22" y="26" transform="rotate(8 22 26)">LUT</text><text x="39" y="32" transform="rotate(-16 39 32)">FRONT</text><text x="33" y="11">TOP</text></g>
            <g class="compasstext"><text x="4" y="54" transform="rotate(-25 4 54)">W</text><text x="60" y="54" transform="rotate(18 60 54)">S</text></g>
          </svg>
          <button class="wcs">Unnamed <svg viewBox="0 0 12 12"><path d="M2 3h8L6 8z" fill="none" stroke="#9a9dae"/></svg></button>
        </div>
        <div class="navbar">
          <svg viewBox="0 0 32 212" fill="none" stroke="#8a909b" stroke-width="1.200">
            <circle cx="26" cy="5" r="3.500" fill="#929aa2" stroke="none"/><path d="m24.500 3.500 3 3m0-3-3 3" stroke-width="1"/>
            <path d="M17 20h10v10a11 11 0 1 1-10-10z"/><circle cx="16" cy="30" r="5.500"/><circle cx="16" cy="30" r="8"/><path d="M14 51h6l-3 3z" fill="#868d99" stroke="none"/>
            <path d="M4 57h24" stroke-width=".7"/>
            <path d="M10 82 5 74q2-2 5 2l-2-11q3-1 4 7l1-9q3 0 3 8l3-8q3 1 0 10l5-6q3 1-1 8-2 12-10 11-4 0-8-12z"/>
            <path d="m5 91 14 14M19 91 5 105M5 95v-4h4M15 91h4v4M5 101v4h4"/><circle cx="21" cy="105" r="5" fill="#a2a6ab"/><path d="m25 109 4 4" stroke-width="2.500"/><path d="M14 119h6l-3 3z" fill="#868d99" stroke="none"/>
            <path d="M15 148v-18h-3l4-4 4 4h-3v18zM15 137q-11 1-10 4 4 5 12 4 10-1 10-4-1-3-8-4"/><path d="M14 157h6l-3 3z" fill="#868d99" stroke="none"/><path d="M4 164h24" stroke-width=".7"/>
            <path d="M5 169h5v6H5zM13 169h5v6h-5zM21 169h5v6h-5zM5 179h15v12H5z"/><path d="M10 181v8l6-4z" fill="#868d99" stroke="none"/>
            <circle cx="26" cy="206" r="3.500"/><path d="M24 206h4" stroke-width="1"/>
          </svg>
        </div>
      </div>
      <div class="cmd">
        <div class="cmdgrip">
          <i></i>
          <svg viewBox="0 0 24 24"><path d="m8 8 8 8M16 8l-8 8" stroke="#e4e4e4" stroke-width="2"/></svg>
          <svg viewBox="0 0 24 24"><path d="m6 19 7-7" stroke="#e4e4e4" stroke-width="2.500"/><path d="M12 9q0-4 4-4l-1 3 2 2 3-1q0 4-4 4-4 0-4-4z" fill="#e4e4e4"/></svg>
        </div>
        <div class="cmdmain">
          <pre class="log">Command: _vscurrent
Command:
Enter an option [2dwireframe/Wireframe/Hidden/Realistic/Conceptual/Shaded/shaded with Edges/shades of Gray/SKetchy/X-
ray/Other] &lt;2dwireframe&gt;: _s</pre>
          <label class="cmdline"><svg viewBox="0 0 30 16"><path d="M1 3h15v10H1z" fill="#f2f2f2" stroke="#555"/><path d="M1 3h15v2H1z" fill="#555"/><path d="m3 7 2 2-2 2M7 11h4" stroke="#555" fill="none"/><path d="M19 6h8l-4 4z" fill="#666"/></svg><input aria-label="Command" placeholder="Type a command"></label>
        </div>
      </div>
    </div>

    <aside class="right">
      <div class="vtabs"><button class="on">Dynamic Pipe Spec</button><button>Pipe Supports Spec</button><button>Instrumentation Spec</button></div>
      <div class="palette">
        <h2 class="palhead">TOOL PALETTES - AUTOCA...</h2>
        <div class="toolscroll">
          <div class="toolist">
            <button class="tool custom"><svg viewBox="0 0 32 32"><path d="M1 8h4v11H1zM6 8h5v11H6zM12 7h5v12h-5zM18 8h3v9h-3zM22 8h3v6h-3z" fill="#d9d9d9"/><path d="M8 4h4M12 4l3-3h13" stroke="#ddd" stroke-width="1.500" fill="none"/><path d="m16 26 2-7 7-7 5 5-7 7z" fill="#f7c66c"/><path d="m25 12 3-2q4 0 4 4l-2 3z" fill="#ff5f5f"/><path d="m16 26 2-7 5 5z" fill="#ddd"/></svg><span>Add Custom Part</span></button>
            <h3 class="spechead">Spec: A1A1</h3>
            <div class="group">
              <h3>Elbow</h3>
              <button class="tool"><svg viewBox="0 0 32 32"><path d="M1 2h6" stroke="#777"/><path d="M13 10q6-5 14-3 1 8-3 11l-7 2z" fill="#9ea4ae"/><path d="M13 10q6-5 14-3-2 7-9 7z" fill="url(#gSteel)"/><ellipse cx="16" cy="19" rx="6" ry="7.500" fill="url(#gSteel)"/><ellipse cx="19" cy="21" rx="4" ry="5" fill="#c9ced6"/></svg><span>ELL 90 LR,BV,, (A1A1)</span></button>
            </div>
            <div class="group">
              <h3>Flange</h3>
              <button class="tool"><svg viewBox="0 0 32 32"><path d="M1 2h6" stroke="#777"/><ellipse cx="17" cy="17" rx="10.500" ry="12.500" transform="rotate(15 17 17)" fill="none" stroke="url(#gSteel)" stroke-width="2.500"/></svg><span>FLANGE WN,FL,RF,150 (A1A1)</span></button>
              <button class="tool"><svg viewBox="0 0 32 32"><path d="M1 2h6" stroke="#777"/><ellipse cx="16" cy="17" rx="8.500" ry="9.500" transform="rotate(15 16 17)" fill="none" stroke="url(#gSteel)" stroke-width="7"/><ellipse cx="16" cy="17" rx="7" ry="9" fill="none" stroke="#666d78"/><ellipse cx="17" cy="18" rx="5" ry="6" fill="#3b4453"/></svg><span>FLANGE WN,FL,RF,150, (A1A1)</span></button>
            </div>
            <div class="group">
              <h3>Pipe</h3>
              <button class="tool"><svg viewBox="0 0 32 32"><path d="m1 6 30 19" stroke="#222" stroke-width="7"/><path d="m1 4 31 19" stroke="#fff" stroke-width="1.500"/><path d="m1 7 30 19" stroke="#cfcfca" stroke-width="2"/><path d="m1 9 30 19" stroke="#eee" stroke-dasharray="2 1"/></svg><span>PIPE, SEAMLESS,PL,,160 (A1A1)</span></button>
            </div>
            <div class="group last"><h3>SpacerDisk</h3></div>
          </div>
          <i class="thumb"></i>
        </div>
      </div>
    </aside>
  </main>

  <footer class="status">
    <div class="sg model"><button>MODEL</button></div>
    <div class="sg"><button aria-label="Grid"><svg><use href="#s-grid"/></svg></button><button aria-label="Snap"><svg><use href="#s-snap"/></svg></button><button class="sm" aria-label="Snap list"><svg><use href="#i-down"/></svg></button></div>
    <div class="sg"><button class="on" aria-label="Ortho"><svg><use href="#s-ortho"/></svg></button></div>
    <div class="sg"><button aria-label="Polar"><svg><use href="#s-polar"/></svg></button><button class="sm" aria-label="Polar list"><svg><use href="#i-down"/></svg></button></div>
    <div class="sg"><button aria-label="Isodraft"><svg><use href="#s-isod"/></svg></button><button class="sm" aria-label="Isodraft list"><svg><use href="#i-down"/></svg></button></div>
    <div class="sg"><button class="on" aria-label="Tracking"><svg><use href="#s-track"/></svg></button></div>
    <div class="sg"><button class="on" aria-label="Object snap"><svg><use href="#s-osnap"/></svg></button><button class="sm" aria-label="Object snap list"><svg><use href="#i-down"/></svg></button></div>
    <div class="sg"><button class="on" aria-label="Annotation visibility"><svg><use href="#s-annv"/></svg></button><button aria-label="Auto scale"><svg><use href="#s-anna"/></svg></button><button aria-label="Annotation scale"><svg><use href="#s-ann"/></svg></button><button class="scale">1:1<svg class="sm"><use href="#i-down"/></svg></button></div>
    <div class="sg"><button aria-label="Workspace"><svg><use href="#s-gear"/></svg></button><button class="sm" aria-label="Workspace list"><svg><use href="#i-down"/></svg></button></div>
    <div class="sg"><button aria-label="Monitor"><svg><use href="#s-plus"/></svg></button></div>
    <div class="sg gap"><button aria-label="Isolate"><svg><use href="#s-isolate"/></svg></button></div>
    <div class="sg gap"><button aria-label="Hardware"><svg><use href="#s-hw"/></svg></button></div>
    <div class="sg gap"><button aria-label="Clean screen"><svg><use href="#s-clean"/></svg></button><button aria-label="Customize"><svg><use href="#s-menu"/></svg></button></div>
  </footer>
</div>

<footer class="taskbar">
  <div class="apps">
    <button aria-label="Start"><svg viewBox="0 0 24 24"><path d="M4 6.500 11 5.500v6H4zM12 5.300 20 4v7.500h-8zM4 12.500h7v6L4 17.500zM12 12.500h8V20l-8-1.300z" fill="#fff"/></svg></button>
    <button aria-label="Search"><svg viewBox="0 0 24 24"><circle cx="14" cy="9" r="5.500" fill="none" stroke="#fff" stroke-width="1.400"/><path d="m10 13-6 7" stroke="#fff" stroke-width="1.500"/></svg></button>
    <button class="run" aria-label="Everything"><svg viewBox="0 0 24 24"><circle cx="14" cy="10" r="5" fill="none" stroke="#f80" stroke-width="3"/><path d="m10 14-5 5" stroke="#f80" stroke-width="3.500"/></svg></button>
    <button aria-label="Snipping Tool"><svg viewBox="0 0 24 24"><ellipse cx="12" cy="10" rx="8" ry="5" fill="#f5eeee" stroke="#c33" transform="rotate(-20 12 10)"/><path d="m10 6 4 5M6 11l9-4" stroke="#999"/><path d="m5 14 8 2" stroke="#d77" stroke-width="1.500"/><path d="m14 13 3 7M20 12l-8 5" stroke="#1b8fe0" stroke-width="2"/></svg></button>
    <button aria-label="Converter"><svg viewBox="0 0 24 24"><path d="M4 3h9v8H4zM8 11h7v9H8z" fill="#f4f0f0"/><path d="M4 4h6v3H4zM5 14h4v4H5z" fill="#e34"/><path d="M14 12h6v8h-6z" fill="#2f86c9"/><path d="M10 9q4-2 4 4M10 16h4" stroke="#e34" fill="none" stroke-width="1.500"/></svg></button>
    <button aria-label="This PC"><svg viewBox="0 0 24 24"><path d="M4 5h16v11H4z" fill="url(#gBlue)"/><path d="M11 16h3v2h4v2H7v-2h4z" fill="#b9d2e6"/></svg></button>
    <button class="run" aria-label="Opera"><svg viewBox="0 0 24 24"><ellipse cx="12" cy="12" rx="5.500" ry="6.500" fill="none" stroke="#f2222f" stroke-width="4"/><path d="M14 5q5 2 5 7t-5 7q3-3 3-7t-3-7z" fill="#a30d16"/></svg></button>
    <button aria-label="Calculator"><svg viewBox="0 0 24 24"><path d="M6 4h13v16H6z" fill="#6b7278"/><path d="M8 6h9v3H8z" fill="#5bc0f8"/><path d="M8 12h9M8 15h9M8 18h9" stroke="#dfe3e6" stroke-width="2" stroke-dasharray="2 1.500"/></svg></button>
    <button class="run" aria-label="Outlook"><svg viewBox="0 0 24 24"><path d="M9 4h10v8h1v8H8V6z" fill="#2a9be8"/><path d="m9 14 6 3 5-5v8H9z" fill="#54c4f7"/><rect x="4" y="7" width="10" height="10" rx="1" fill="#0f62b5"/><circle cx="9" cy="12" r="2.500" fill="none" stroke="#fff" stroke-width="1.500"/></svg></button>
    <button class="run" aria-label="Excel"><svg viewBox="0 0 24 24"><path d="M8 4h12v16H8z" fill="#21a366"/><path d="M14 12h6v8H8v-4h6z" fill="#107c41"/><rect x="4" y="7" width="10" height="10" rx="1" fill="#17733f"/><path d="m6.500 9 5 6M11.500 9l-5 6" stroke="#fff" stroke-width="1.500"/></svg></button>
    <button class="run act" aria-label="AutoCAD Plant 3D"><svg viewBox="0 0 24 24"><path d="M4 4h16v16H4z" fill="#fbeae4"/><path d="m7 17 4-11h3l3 11h-3l-1-3h-3l-1 3z" fill="#b4232b"/><path d="m11 12 1-3 1 3z" fill="#fbeae4"/></svg></button>
    <button class="run" aria-label="File Explorer"><svg viewBox="0 0 24 24"><path d="M4 5h6l2 2h8v12H4z" fill="#fbc94b"/><path d="M4 9h16v10H4z" fill="#ffdc74"/><path d="M7 20v-6h10v6h-3v-3h-4v3z" fill="#3d9be5"/></svg></button>
    <button class="run" aria-label="AutoCAD"><svg viewBox="0 0 24 24"><path d="M4 4h16v16H4z" fill="#fbeae4"/><path d="m5 19 5-14h4l5 14h-4l-1-4h-4l-1 4z" fill="#b4232b"/><path d="m11 12 1-4 1 4z" fill="#fbeae4"/></svg></button>
    <button class="run" aria-label="PDF editor"><svg viewBox="0 0 24 24"><path d="M4 4h10l6 6v10H4z" fill="#702a77"/><path d="M15 4h4v4z" fill="#702a77"/><path d="M15 9a4 4 0 1 0 1 4h-4" fill="none" stroke="#fff" stroke-width="1.800"/></svg></button>
    <button class="run" aria-label="Paint"><svg viewBox="0 0 24 24"><path d="M11 6q7 0 7 6 0 4-4 3-3 0-3 3 0 2-3 2-4-1-4-6 1-8 7-8z" fill="#d4e9f7"/><circle cx="7.500" cy="11" r="1.500" fill="#e44"/><circle cx="11" cy="9" r="1.500" fill="#e9a100"/><circle cx="7" cy="15" r="1.500" fill="#2a6"/><circle cx="14.500" cy="11" r="1.500" fill="#36c"/><path d="m18 4 1 9-1 7-1-7z" fill="#e39a3b" stroke="#e39a3b"/></svg></button>
  </div>
  <div class="tray">
    <button>Shortcuts</button><span class="raq">»</span>
    <svg viewBox="0 0 24 24"><path d="m6 15 6-6 6 6" fill="none" stroke="#eee" stroke-width="1.500"/></svg>
    <svg viewBox="0 0 24 24"><path d="m12 6 6 12h-4l-4-8z" fill="#2b7de0"/><path d="m12 6-6 12h4l4-8z" fill="#8cc63f"/><path d="m6 18 6-4 2 4z" fill="#1bb9b4"/></svg>
    <svg viewBox="0 0 24 24"><path d="M9 7h11v9H9zM14 16v3M11 19h6M5 6h5v4H5zM7 10v5h2" fill="none" stroke="#eee" stroke-width="1.300"/></svg>
    <svg viewBox="0 0 24 24"><path d="M4 10h3l4-4v12l-4-4H4z" fill="none" stroke="#eee" stroke-width="1.300"/><path d="M13 10q1 2 0 4M15.500 8q2 4 0 8M18 6q3 6 0 12" fill="none" stroke="#eee"/></svg>
    <span class="lang">ENG</span><time>12:59 PM</time>
    <svg class="note" viewBox="0 0 24 24"><path d="M4 5h16v12h-5l-3 4v-4H4z" fill="#fff"/><path d="M7 8.500h10M7 11.500h10M7 14.500h6" stroke="#222"/></svg>
  </div>
</footer>
</body>
</html>
```
FILE: styles.css
```css
* { box-sizing: border-box; }
:root {
  --dark: #222933;
  --base: #3b4453;
  --head: #2f3541;
  --ctl: #4d586c;
  --edge: #222933;
  --blue: #6cb5f0;
  --txt: #ececec;
}
body {
  margin: 0;
  min-height: 100vh;
  display: flex;
  flex-direction: column;
  background: #e3ecf6;
  color: var(--txt);
  font: 12px/16px "Open Sans", "Noto Sans", sans-serif;
}
h1, h2, h3, p, ul, pre { margin: 0; padding: 0; font-size: 12px; font-weight: 400; }
button, input, select { font: inherit; color: inherit; border: 0; background: none; padding: 0; margin: 0; min-width: 0; }
button { display: flex; align-items: center; justify-content: center; }
a { color: inherit; text-decoration: none; }
select { appearance: none; }
svg { width: 24px; height: 24px; display: block; flex: none; }
svg.sm, .sm svg { width: 12px; height: 12px; }
.sprite { position: absolute; width: 0; height: 0; }

.window {
  flex: 1;
  margin: 2px 2px 0;
  display: flex;
  flex-direction: column;
  background: var(--base);
  border-bottom: 1px solid var(--dark);
}

/* title bar and ribbon tabs */
.header {
  display: grid;
  grid-template: 29px 20px / 46px 1fr;
  background: var(--dark);
  padding-left: 4px;
  margin: 0 4px 0 0;
}
.appbtn {
  grid-row: 1 / 3;
  margin: 4px 5px 4px 0;
  flex-direction: column;
  justify-content: flex-start;
  background: linear-gradient(#d6d6d6, #8b8b8b);
  border: 1px solid #e8e8e8;
  overflow: hidden;
}
.appbtn svg { width: 39px; height: 39px; margin-bottom: -11px; }
.appbtn span { font-size: 9px; line-height: 10px; font-weight: 700; color: #111; }
.titlebar { display: flex; align-items: center; }
.quick { display: flex; align-items: center; color: #ddd; }
.quick .more { margin-left: 3px; }
.title { flex: 1; display: flex; justify-content: center; gap: 12px; }
.infocenter { display: flex; align-items: center; color: #ddd; }
.infosearch { width: 178px; height: 20px; margin: 0 2px 0 3px; padding: 0 2px; background: #474f61; font-style: italic; }
.infosearch::placeholder { color: #b2b6bd; opacity: 1; }
.signin { width: 120px; justify-content: flex-start; color: #fff; }
.signin .end { margin-left: auto; }
.cart { margin-left: 2px; }
.help { margin-left: 7px; padding-left: 6px; border-left: 1px solid #4d5668; }
.winctl { display: flex; margin-left: 53px; gap: 1px; }
.tabs { display: flex; color: #b5b8bd; }
.tabs a { padding: 0 9px; line-height: 20px; }
.tabs .on { background: var(--base); color: #fff; padding: 0 12px 0 10px; margin-right: 2px; }
.ribmin { margin-left: 10px; }
.ribmin svg { width: 26px; height: 12px; }

/* ribbon */
.ribbon { display: flex; gap: 1px; margin: 0 4px; padding-left: 2px; background: var(--dark); }
.panel { display: flex; flex-direction: column; background: var(--base); padding: 3px 1px 0; }
.panel .tools { display: flex; height: 76px; justify-content: center; }
.panel h2 { display: flex; justify-content: center; align-items: center; line-height: 18px; white-space: nowrap; }
.panel h2 svg { margin-left: 4px; }
.big { flex-direction: column; justify-content: flex-start; line-height: 15px; text-align: center; white-space: nowrap; padding-top: 2px; }
.big svg { width: 34px; height: 34px; margin-bottom: 3px; }
.combo { position: relative; display: flex; align-items: center; height: 22px; background: var(--ctl); border: 1px solid #242b35; }
.combo select { flex: 1; height: 20px; padding: 0 14px 0 5px; }
.combo::after { content: ""; position: absolute; right: 1px; top: 8px; border: 4px solid transparent; border-top-color: #ddd; }
.field { height: 22px; border: 1px solid #242b35; padding: 0 2px 4px; }
.ic { width: 24px; height: 22px; }
.ic.on, .mini .on { border: 1px solid var(--blue); background: #43607f; }
.mini { display: grid; grid-template-columns: 25px 25px; grid-auto-rows: 24px; }
.p-project { width: 126px; }
.panel.p-project .tools { padding-left: 6px; }
.drop { width: 10px; padding-top: 40px; }
.p-part { width: 316px; }
.p-part .big { width: 41px; }
.partgrid { display: grid; grid-template-columns: 100px 30px 28px 28px; grid-auto-rows: 22px; gap: 2px 0; margin-right: 2px; justify-items: center; }
.partgrid .combo { width: 100%; }
.partgrid .wide { grid-column: span 2; margin-right: 6px; justify-self: start; width: 127px; }
.pcf { position: relative; }
.pcf em { position: absolute; left: 4px; top: 1px; font-style: normal; line-height: 10px; }
.p-ortho { width: 75px; }
.p-compass { width: 87px; }
.panel .compassgrid { display: grid; grid-template-columns: 24px 55px; gap: 2px 4px; align-content: start; }
.p-elev { width: 130px; }
.panel .elevgrid { display: grid; grid-template-columns: 88px 24px; gap: 6px; align-content: start; padding-top: 12px; }
.elevgrid .combo { grid-column: span 2; width: 115px; }
.iconed select { padding-left: 0; }
.small svg { width: 18px; height: 18px; margin: 0 2px 0 1px; }
.p-slope { width: 110px; padding-left: 3px; }
.panel .slopegrid { display: flex; flex-direction: column; justify-content: flex-start; gap: 6px; padding-top: 10px; }
.pair { display: flex; gap: 3px; }
.pair .field { flex: 0 0 47px; width: 47px; }
.pair .dim { flex: 0 0 74px; color: #7f8794; }
.p-supp, .p-equip, .p-vis { width: 92px; }
.p-supp .big, .p-equip .big, .p-vis .big { width: 40px; }
.p-view { width: 127px; padding-left: 3px; }
.panel .viewgrid { flex-direction: column; justify-content: flex-start; gap: 2px; }
.viewgrid .combo { width: 122px; }
.split { width: 40px; }
.layers { flex-direction: column; width: 59px; background: var(--ctl); border: 1px solid #566177; padding: 3px 0; }
.layers span { flex: 1; }
.layers > svg:first-child { width: 34px; height: 34px; }

/* drawing tabs */
.doctabs { display: flex; align-items: flex-end; height: 27px; margin: 0 4px; padding-left: 14px; background: var(--dark); }
.doctab { display: flex; align-items: center; justify-content: space-between; height: 22px; width: 126px; padding: 0 8px 0 18px; border-radius: 10px 10px 0 0; background: #2a313d; color: #b5b8bd; }
.doctab.on { background: #343c4a; color: #fff; padding-left: 15px; }
.doctab svg { width: 16px; height: 16px; color: #999ea6; }
.plus { height: 20px; width: 24px; margin-left: 8px; background: #2d3440; border-radius: 6px; }

/* work area */
.work { flex: 1; display: grid; grid-template-columns: 240px 1fr 233px; padding-top: 4px; }
.left { display: grid; grid-template-columns: 216px 20px; margin-left: 4px; align-items: start; }
.right { display: grid; grid-template-columns: 22px 1fr; margin-left: 2px; align-items: start; }
.palette { min-width: 0; align-self: stretch; border-bottom: 1px solid #272e39; margin-bottom: 3px; }
.palhead { height: 20px; margin: 2px 2px 0 0; padding-left: 5px; line-height: 19px; background: var(--head); border-radius: 3px 3px 0 0; display: flex; align-items: center; gap: 6px; white-space: nowrap; }
.palhead::before { content: ""; width: 4px; height: 11px; border: dotted #b5b8bd; border-width: 0 1px; }
.vtabs { display: flex; flex-direction: column; padding-top: 24px; }
.vtabs button { height: 121px; writing-mode: vertical-rl; transform: rotate(180deg); background: var(--head); color: #b5b8bd; border: 1px solid #222933; border-radius: 4px 0 0 4px; font-size: 11px; white-space: nowrap; }
.vtabs .on { background: var(--base); color: #fff; border-right-color: var(--base); }
.right .vtabs button { border-radius: 0 4px 4px 0; }
.right .vtabs .on { border-right-color: #222933; border-left-color: var(--base); }
.curr { padding: 0 9px 0 7px; line-height: 14px; }
.currrow { display: flex; justify-content: space-between; margin-top: 3px; }
.projsel { position: relative; width: 127px; height: 24px; border: 2px solid #fff; }
.projsel select { width: 106px; height: 20px; padding-left: 15px; background: var(--base); text-overflow: clip; }
.projsel svg { position: absolute; right: 0; top: 0; width: 17px; height: 20px; background: #fff; }
.pubbox { display: flex; align-items: center; width: 60px; height: 25px; border: 1px solid transparent; border-right-color: #fff; border-bottom-color: #fff; color: #aaa; }
.box { margin: 7px 9px 0 7px; }
.box h3 { display: flex; justify-content: space-between; font-weight: 700; line-height: 19px; height: 19px; padding-left: 9px; background: var(--head); color: #fff; }
.box h3 span { display: flex; align-items: center; }
.box h3 svg { width: 17px; height: 17px; }
.box h3 .sm { width: 12px; margin: 0 4px; }
.boxbody { border: 1px solid #c3d2e0; }
.search { display: flex; align-items: center; height: 21px; margin: 7px 5px 8px; background: var(--ctl); }
.search input { flex: 1; text-align: center; padding-left: 20px; }
.search input::placeholder { color: #c0c4ca; opacity: 1; }
.search svg { width: 18px; height: 18px; margin: 0 2px; }
.treewrap { display: flex; height: 143px; margin: 0 1px; overflow: hidden; }
.tree { flex: 1; list-style: none; padding-left: 29px; background: repeating-linear-gradient(#a5abb4 0 1px, transparent 1px 2px) 29px 0 / 1px 100% no-repeat; }
.tree li { display: flex; align-items: center; height: 18px; gap: 4px; border-left: 1px dotted #b5bac2; margin-left: 19px; }
.tree li::before { content: ""; width: 10px; margin-right: -4px; border-top: 1px dotted #b5bac2; }
.tree svg { width: 15px; height: 15px; }
.tree a { padding: 0 2px; line-height: 18px; }
.tree .sel { background: #fff; color: #111; }
.vscroll { width: 15px; background: #f0f0f0; display: flex; flex-direction: column; justify-content: space-between; align-items: center; margin-top: 1px; }
.vscroll svg, .hscroll svg { width: 15px; height: 16px; }
.vscroll i { width: 15px; height: 17px; background: #cdcdcd; margin-top: -30px; }
.hscroll { display: flex; height: 16px; background: #f0f0f0; margin: 0 1px; }
.hscroll i { width: 48px; background: #cdcdcd; margin-right: auto; }
.tree-h { padding-right: 15px; margin-bottom: 2px; }
.tree-h i { width: 124px; }
.details { margin-top: 13px; }
.details .boxbody { display: flex; flex-direction: column; min-height: 185px; }
.details p { flex: 1; padding: 6px 0 0 7px; font-size: 11px; white-space: nowrap; }

.center { display: flex; flex-direction: column; min-width: 0; margin-left: 3px; }
.viewport { position: relative; flex: 1; background: #222830; overflow: hidden; }
.scene { position: absolute; inset: 0; width: 100%; height: 100%; }
.vplabel { position: absolute; left: 2px; top: 6px; }
.vpctl { position: absolute; right: 7px; top: 7px; display: flex; gap: 4px; }
.vpctl svg { width: 16px; height: 16px; }
.cube { position: absolute; right: 8px; top: 51px; width: 80px; }
.cube > svg { width: 80px; height: 62px; }
.cubetext { font: 700 6px "Liberation Sans", sans-serif; fill: #6a6d72; }
.compasstext { font: 700 11px "Liberation Sans", sans-serif; fill: #c4c7ca; }
.wcs { width: 68px; height: 17px; margin: 12px 0 0 5px; background: #b5b9c8; border: 1px solid #c6c9d3; border-radius: 4px; color: #5c6270; font-size: 11px; }
.wcs svg { width: 12px; height: 12px; }
.navbar { position: absolute; right: 3px; top: 166px; width: 33px; border: 1px solid #6f767e; border-right-color: #c0c3c6; border-radius: 4px; background: #a2a6ab; }
.navbar svg { width: 31px; height: 212px; }
.cmd { display: flex; margin-top: 4px; margin-bottom: 1px; background: var(--head); border-top: 1px solid #222933; }
.cmdgrip { width: 25px; display: flex; flex-direction: column; align-items: center; padding-top: 3px; }
.cmdgrip i { width: 17px; height: 6px; background: radial-gradient(circle, #ccc 40%, transparent 50%) 0 0 / 3px 3px; }
.cmdmain { flex: 1; min-width: 0; background: #c8c8c8; color: #111; }
.log { padding: 14px 2px 1px; font: 12px/15px "Liberation Mono", monospace; overflow: hidden; }
.cmdline { display: flex; align-items: center; height: 20px; background: #fff; border-top: 1px solid #222933; }
.cmdline svg { width: 30px; height: 16px; margin-left: 3px; }
.cmdline input { flex: 1; margin-left: 3px; font: italic 12px "Liberation Mono", monospace; color: #777; }
.cmdline input::placeholder { color: #777; opacity: 1; }

/* tool palettes */
.toolscroll { display: flex; justify-content: space-between; padding-right: 5px; }
.toolist { flex: 1; margin: 0 8px 0 4px; color: #b5b8bd; }
.toolist h3 { line-height: 16px; }
.tool { width: 100%; justify-content: flex-start; text-align: left; color: #fff; min-height: 42px; }
.tool svg { width: 32px; height: 32px; margin: 0 4px 0 6px; }
.tool.custom { height: 57px; padding-bottom: 3px; border-bottom: 1px solid #2a313c; }
.spechead { height: 56px; padding-top: 19px; border-bottom: 1px solid #2a313c; }
.group { padding: 19px 0 9px; border-bottom: 1px solid #2a313c; }
.group h3 { margin-bottom: 11px; }
.last { border: 0; padding-bottom: 0; }
.thumb { width: 5px; height: 308px; margin-top: 5px; background: var(--head); border-radius: 3px; }

/* status bar */
.status { display: flex; justify-content: flex-end; align-items: center; height: 28px; margin: 1px 4px 5px; padding-right: 3px; background: var(--dark); gap: 3px; }
.sg { display: flex; height: 24px; background: var(--base); }
.sg button { width: 24px; height: 24px; }
.sg .sm { width: 13px; }
.sg .on { background: #5f8fc6; color: #fff; width: 22px; height: 22px; margin: 1px; }
.model button { width: 45px; }
.status .scale { width: 32px; }
.gap button { width: 23px; }

/* taskbar */
.taskbar { display: flex; justify-content: space-between; height: 29px; margin-top: 1px; background: #1c1c1c; color: #eee; }
.apps { display: flex; }
.apps button { width: 35px; height: 29px; margin: 0 1px; }
.apps .run { border-bottom: 2px solid #76b9ed; padding-top: 2px; }
.apps .act { background: #4a4a4a; }
.tray { display: flex; align-items: center; padding-right: 21px; }
.raq { font-size: 18px; margin: -8px 3px 0 6px; }
.lang { margin: 0 11px 0 5px; }
.note { margin-left: 12px; }
```
